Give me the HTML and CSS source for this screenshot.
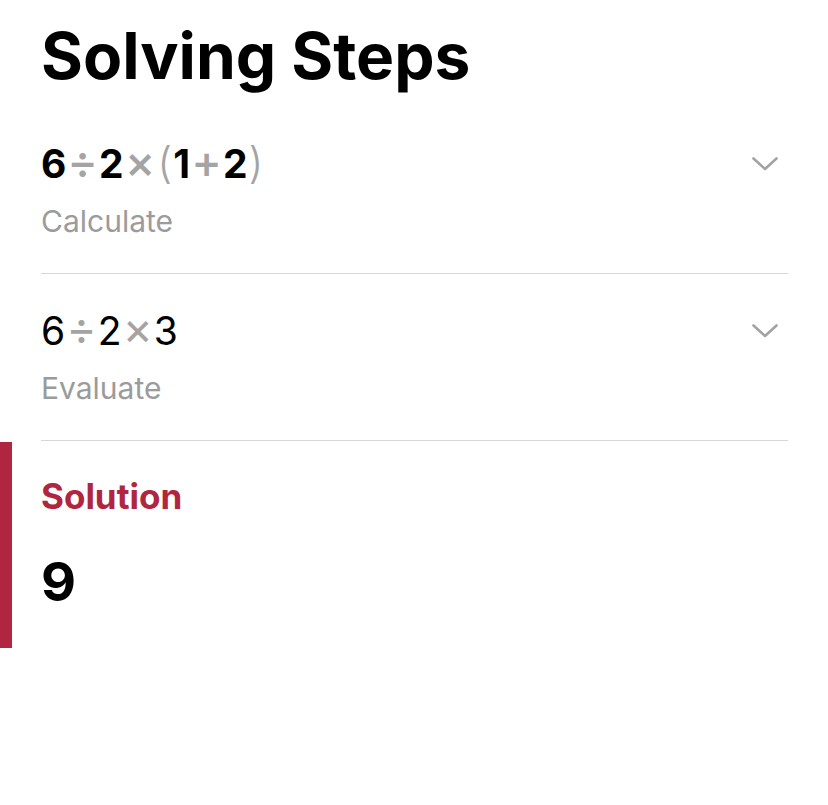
FILE: index.html
```html
<!DOCTYPE html>
<html lang="en">
<head>
<meta charset="utf-8">
<title>Solving Steps</title>
<link rel="stylesheet" href="styles.css">
</head>
<body>
<main class="page">
  <h1 class="title">Solving Steps</h1>
  <section class="steps">
    <div class="step">
      <div class="step-head">
        <div class="expr expr-bold"><span>6</span><span class="op">÷</span><span>2</span><span class="op">×</span><span class="paren">(</span><span>1</span><span class="op">+</span><span>2</span><span class="paren">)</span></div>
        <svg class="chevron" viewBox="0 0 26 14" width="26" height="14"><polyline points="1.5,1.5 13,12 24.5,1.5" fill="none" stroke="#a3a3a3" stroke-width="2.6" stroke-linecap="round" stroke-linejoin="round"/></svg>
      </div>
      <div class="step-desc">Calculate</div>
    </div>
    <div class="step">
      <div class="step-head">
        <div class="expr"><span>6</span><span class="op">÷</span><span>2</span><span class="op">×</span><span>3</span></div>
        <svg class="chevron" viewBox="0 0 26 14" width="26" height="14"><polyline points="1.5,1.5 13,12 24.5,1.5" fill="none" stroke="#a3a3a3" stroke-width="2.6" stroke-linecap="round" stroke-linejoin="round"/></svg>
      </div>
      <div class="step-desc">Evaluate</div>
    </div>
  </section>
  <section class="solution">
    <div class="solution-label">Solution</div>
    <div class="solution-value">9</div>
  </section>
</main>
</body>
</html>
```
FILE: styles.css
```css
html, body {
  margin: 0;
  padding: 0;
  background: #ffffff;
}
body {
  font-family: Inter, "Noto Sans", "Liberation Sans", sans-serif;
  color: #000;
}
.page {
  width: 828px;
}
.title {
  margin: 0;
  padding: 19px 40px 14px 41px;
  font-size: 64px;
  line-height: 74px;
  font-weight: 700;
}
.steps {
  padding: 0 40px 0 41px;
}
.step {
  border-bottom: 1px solid #d6d6d6;
  padding: 32px 0 33px;
}
.step-head {
  display: flex;
  align-items: flex-start;
  justify-content: space-between;
  padding-right: 10px;
}
.expr {
  display: flex;
  align-items: baseline;
  height: 44px;
  font-size: 39px;
  line-height: 44px;
  font-weight: 400;
}
.expr-bold {
  font-weight: 700;
}
.op {
  color: #a4a4a4;
  font-weight: 400;
  font-size: 46px;
  margin: 0 1px;
}
.expr-bold .op {
  font-weight: 500;
}
.paren {
  color: #a4a4a4;
  font-weight: 300;
  font-size: 43px;
  margin: 0 1px;
}
.chevron {
  display: block;
  margin-top: 18px;
}
.step-desc {
  margin-top: 19px;
  font-size: 30px;
  line-height: 38px;
  color: #9b9b9b;
}
.solution {
  margin-top: 1px;
  border-left: 12px solid #b0253f;
  padding: 34px 0 36px 29px;
}
.solution-label {
  font-size: 35px;
  line-height: 40px;
  font-weight: 700;
  color: #b0253f;
}
.solution-value {
  margin-top: 35px;
  font-size: 54px;
  line-height: 61px;
  font-weight: 700;
}
```
